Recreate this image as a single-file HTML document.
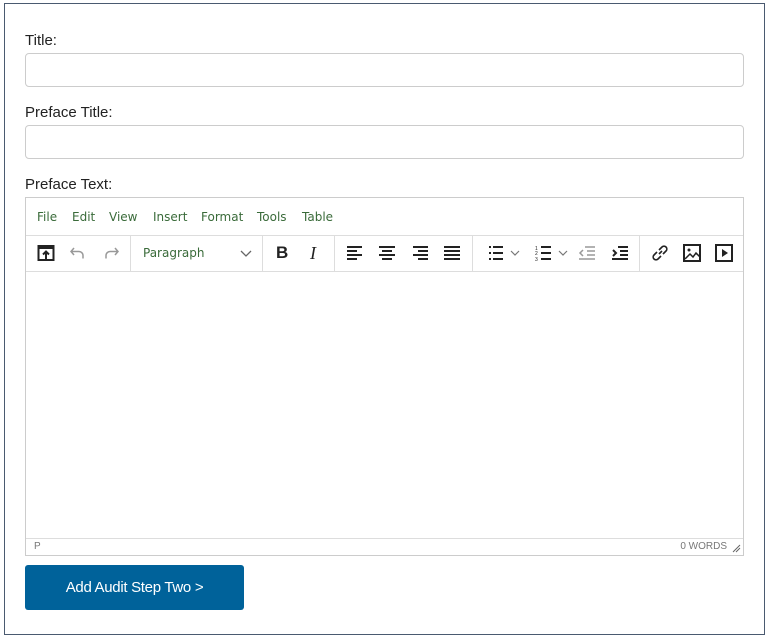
<!DOCTYPE html><html><head><style>
body{margin:0;background:#fff;font-family:"Liberation Sans",sans-serif;}
.frame{position:absolute;left:4px;top:3px;width:759px;height:630px;border:1px solid #4a5a70;}
.lbl{position:absolute;left:25px;font-size:15px;color:#222;}
.inp{position:absolute;left:25px;width:717px;height:32px;border:1px solid #ccc;border-radius:4px;}
.ed{position:absolute;left:25px;top:197px;width:717px;height:357px;border:1px solid #ccc;}
.menu{position:absolute;top:0;left:0;right:0;height:37px;border-bottom:1px solid #ddd;}
.menu span{position:absolute;top:12px;font-size:13px;color:#3a6b3a;font-family:"DejaVu Sans",sans-serif;font-size:12px;}
.tb{position:absolute;top:37px;left:0;right:0;height:36px;border-bottom:1px solid #ddd;}
.sep{position:absolute;top:0;height:36px;border-left:1px solid #ddd;}
.ic{position:absolute;top:9px;}
.status{position:absolute;bottom:0;left:0;right:0;height:16px;border-top:1px solid #ddd;font-size:10px;color:#777;}
.btn{position:absolute;left:25px;top:565px;width:219px;height:45px;background:#00629a;border-radius:3px;color:#fff;font-size:15px;text-align:center;line-height:45px;letter-spacing:-0.3px;}
</style></head><body>
<div class="frame"></div>
<div class="lbl" style="top:32px">Title:</div>
<div class="inp" style="top:53px"></div>
<div class="lbl" style="top:104px">Preface Title:</div>
<div class="inp" style="top:125px"></div>
<div class="lbl" style="top:176px">Preface Text:</div>
<div class="ed">
<div class="menu"><span style="left:11px">File</span><span style="left:46px">Edit</span><span style="left:83px">View</span><span style="left:127px">Insert</span><span style="left:175px">Format</span><span style="left:231px">Tools</span><span style="left:276px">Table</span></div>
<div class="tb">
<svg class="ic" style="left:11px" width="18" height="18" viewBox="0 0 18 18"><rect x="1.5" y="2" width="15" height="14" fill="none" stroke="#222" stroke-width="2"/><rect x="1.5" y="2" width="15" height="3" fill="#222"/><path d="M9 15V8M6 10.5L9 7.5 12 10.5" stroke="#222" stroke-width="2" fill="none"/></svg>
<svg class="ic" style="left:43px" width="18" height="18"><path d="M5 4L2 7.5 5 11M2 7.5h8a4 4 0 0 1 4 4v3" stroke="#999" stroke-width="1.5" fill="none"/></svg>
<svg class="ic" style="left:76px" width="18" height="18"><path d="M13 4L16 7.5 13 11M16 7.5H8a4 4 0 0 0-4 4v3" stroke="#999" stroke-width="1.5" fill="none"/></svg>
<div class="sep" style="left:104px"></div>
<span style="position:absolute;left:117px;top:11px;font-size:12px;color:#3a6b3a;font-family:'DejaVu Sans',sans-serif">Paragraph</span>
<svg class="ic" style="left:213px" width="14" height="18"><path d="M2 7l5 5 5-5" stroke="#666" stroke-width="1.3" fill="none"/></svg>
<div class="sep" style="left:236px"></div>
<span style="position:absolute;left:250px;top:8px;font-size:17px;font-weight:bold;color:#222">B</span>
<span style="position:absolute;left:284px;top:8px;font-size:18px;font-style:italic;color:#222;font-family:'Liberation Serif',serif">I</span>
<div class="sep" style="left:308px"></div>
<svg class="ic" style="left:320px" width="18" height="18"><path d="M1 3h15M1 7h10M1 11h15M1 15h10" stroke="#222" stroke-width="2"/></svg>
<svg class="ic" style="left:352px" width="18" height="18"><path d="M1 3h16M4 7h10M1 11h16M4 15h10" stroke="#222" stroke-width="2"/></svg>
<svg class="ic" style="left:385px" width="18" height="18"><path d="M2 3h15M7 7h10M2 11h15M7 15h10" stroke="#222" stroke-width="2"/></svg>
<svg class="ic" style="left:417px" width="18" height="18"><path d="M1 3h16M1 7h16M1 11h16M1 15h16" stroke="#222" stroke-width="2"/></svg>
<div class="sep" style="left:446px"></div>
<svg class="ic" style="left:461px" width="36" height="18"><path d="M2 3h2M2 9h2M2 15h2M6 3h10M6 9h10M6 15h10" stroke="#222" stroke-width="2"/><path d="M24 7l4 4 4-4" stroke="#777" stroke-width="1.2" fill="none"/></svg>
<svg class="ic" style="left:509px" width="36" height="18"><text x="0" y="6" font-size="5" fill="#222">1</text><text x="0" y="11" font-size="5" fill="#222">2</text><text x="0" y="17" font-size="5" fill="#222">3</text><path d="M6 3h10M6 9h10M6 15h10" stroke="#222" stroke-width="2"/><path d="M24 7l4 4 4-4" stroke="#777" stroke-width="1.2" fill="none"/></svg>
<svg class="ic" style="left:552px" width="18" height="18"><path d="M7 3h10M9 7h8M9 11h8M1 15h16" stroke="#999" stroke-width="1.5"/><path d="M5 6L2 9l3 3" stroke="#999" stroke-width="1.5" fill="none"/></svg>
<svg class="ic" style="left:585px" width="18" height="18"><path d="M7 3h10M9 7h8M9 11h8M1 15h16" stroke="#222" stroke-width="2"/><path d="M2 6l3 3-3 3" stroke="#222" stroke-width="2" fill="none"/></svg>
<div class="sep" style="left:613px"></div>
<svg class="ic" style="left:625px" width="18" height="18"><path d="M8 10l3-3M6 8l-3 3a2.5 2.5 0 0 0 4 4l3-3M12 10l3-3a2.5 2.5 0 0 0-4-4L8 6" stroke="#222" stroke-width="1.6" fill="none"/></svg>
<svg class="ic" style="left:657px" width="18" height="18"><rect x="1" y="1" width="16" height="16" fill="none" stroke="#222" stroke-width="2"/><circle cx="6" cy="6" r="1.5" fill="#222"/><path d="M2 15l5-5 3 3 3-4 4 4" stroke="#222" stroke-width="1.5" fill="none"/></svg>
<svg class="ic" style="left:689px" width="18" height="18"><rect x="1" y="1" width="16" height="16" fill="none" stroke="#222" stroke-width="2"/><path d="M7 5l6 4-6 4z" fill="#222"/></svg>
</div>
<div class="status"><span style="position:absolute;left:8px;top:2px">P</span><span style="position:absolute;right:16px;top:2px">0 WORDS</span><svg style="position:absolute;right:2px;top:5px" width="9" height="9"><path d="M1 8L8 1M4 8l4-4" stroke="#666"/></svg></div>
</div>
<div class="btn">Add Audit Step Two &gt;</div>
</body></html>
